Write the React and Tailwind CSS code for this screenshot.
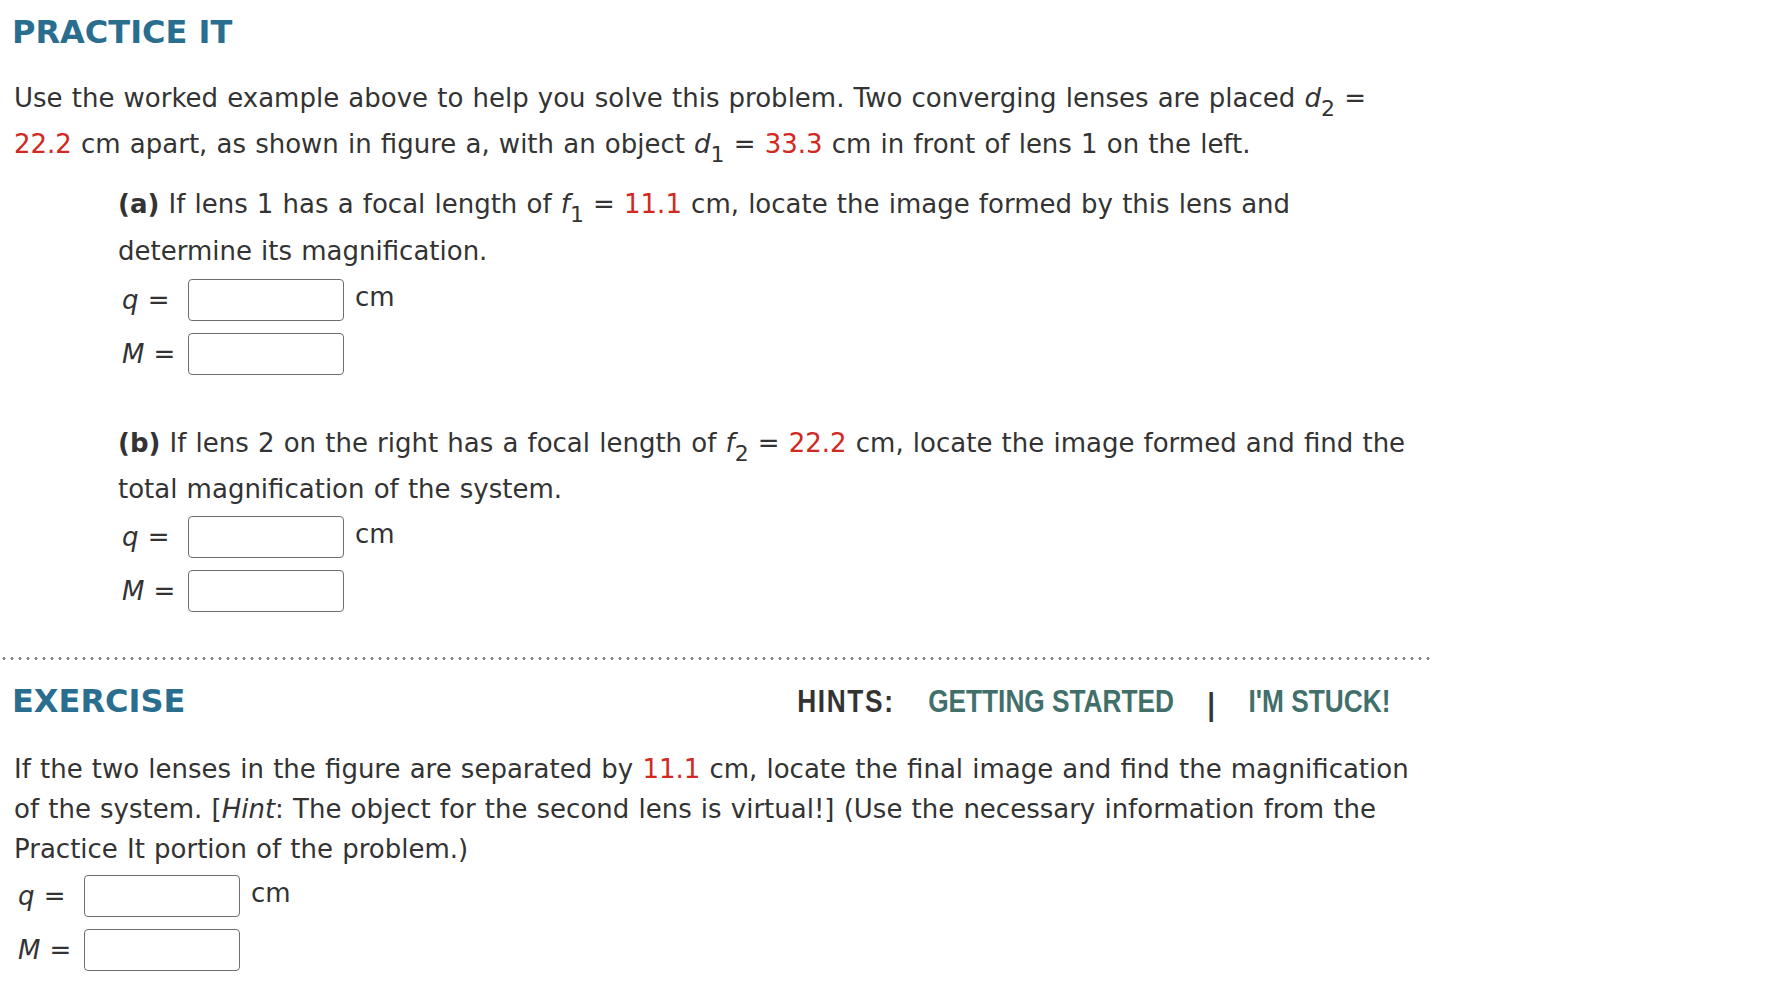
import React from "react";

const Red = ({ children }) => <span className="text-[#d0291f]">{children}</span>;

const Sym = ({ v, sub }) => (
  <>
    <i>{v}</i>
    {sub && <span className="text-[22px] leading-none align-[-9px]">{sub}</span>}
  </>
);

const Answers = ({ pad }) => (
  <div className={`grid grid-cols-[70px_156px_auto] gap-y-[12px] items-center ${pad}`}>
    <span className="pl-[4px]">
      <i>q</i> =
    </span>
    <input type="text" className="h-[42px] w-[156px] rounded-[4px] border border-[#6e6e6e] bg-white" />
    <span className="pl-[11px] -mt-[6px]">cm</span>
    <span className="pl-[4px]">
      <i>M</i> =
    </span>
    <input type="text" className="h-[42px] w-[156px] rounded-[4px] border border-[#6e6e6e] bg-white" />
    <span />
  </div>
);

export default function App() {
  return (
    <div className="min-h-screen bg-white text-[#333] font-['DejaVu_Sans',Verdana,sans-serif] text-[26px] [word-spacing:0.9px]">
      <div className="w-[1430px] pt-[13px] pb-[24px]">
        <h2 className="pl-[12px] text-[32px] leading-[38px] font-bold text-[#2a6e8f] [word-spacing:0px]">PRACTICE IT</h2>

        <p className="mt-[24px] pl-[14px] leading-[46px]">
          Use the worked example above to help you solve this problem. Two converging lenses are placed <Sym v="d" sub="2" /> =
          <br />
          <Red>22.2</Red> cm apart, as shown in figure a, with an object <Sym v="d" sub="1" /> = <Red>33.3</Red> cm in front of lens 1 on the left.
        </p>

        <div className="mt-[14px] pl-[118px]">
          <p className="leading-[47px]">
            <b>(a)</b> If lens 1 has a focal length of <Sym v="f" sub="1" /> = <Red>11.1</Red> cm, locate the image formed by this lens and
            <br />
            determine its magnification.
          </p>
          <Answers pad="mt-[4px]" />

          <p className="mt-[45px] leading-[46px]">
            <b>(b)</b> If lens 2 on the right has a focal length of <Sym v="f" sub="2" /> = <Red>22.2</Red> cm, locate the image formed and find the
            <br />
            total magnification of the system.
          </p>
          <Answers pad="mt-[4px]" />
        </div>

        <div className="mt-[45px] h-[3px] w-[1430px] bg-[radial-gradient(circle,#8a8a8a_1.4px,transparent_1.7px)] bg-[length:8px_3px]" />

        <div className="mt-[22px] flex items-center justify-between pr-[40px]">
          <h2 className="pl-[12px] text-[32px] leading-[38px] font-bold text-[#2a6e8f] [word-spacing:0px]">EXERCISE</h2>
          <div className="flex items-center gap-[41px] origin-right scale-x-[0.82] font-['Liberation_Sans',Arial,sans-serif] text-[32px] font-bold leading-[38px] [word-spacing:0px]">
            <span className="text-[#333] tracking-[2px]">HINTS:</span>
            <span className="text-[#41706b]">GETTING STARTED</span>
            <span className="text-[#333] translate-y-[3px]">|</span>
            <span className="text-[#41706b]">I'M STUCK!</span>
          </div>
        </div>

        <p className="mt-[29px] pl-[14px] leading-[40px]">
          If the two lenses in the figure are separated by <Red>11.1</Red> cm, locate the final image and find the magnification
          <br />
          of the system. [<i>Hint</i>: The object for the second lens is virtual!] (Use the necessary information from the
          <br />
          Practice It portion of the problem.)
        </p>
        <Answers pad="mt-[6px] pl-[14px]" />
      </div>
    </div>
  );
}
